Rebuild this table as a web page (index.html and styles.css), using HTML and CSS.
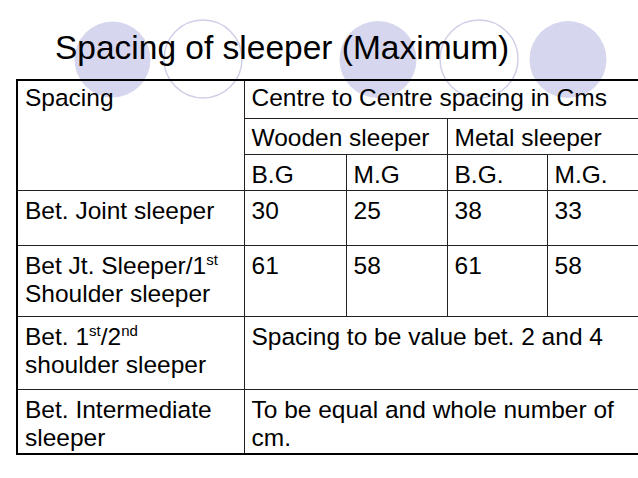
FILE: index.html
```html
<!DOCTYPE html>
<html>
<head>
<meta charset="utf-8">
<link rel="stylesheet" href="styles.css">
</head>
<body>
<div class="slide">
  <svg class="deco" width="638" height="110" viewBox="0 0 638 110" aria-hidden="true">
    <circle cx="112.5" cy="59.5" r="38" class="fill"/>
    <circle cx="203" cy="59" r="39" class="ring"/>
    <circle cx="378" cy="59.5" r="38.5" class="fill"/>
    <circle cx="479" cy="59" r="39" class="ring"/>
    <circle cx="568" cy="59.5" r="38.5" class="fill"/>
  </svg>
  <h1 class="title">Spacing of sleeper (Maximum)</h1>
  <table class="grid">
    <colgroup>
      <col class="c1"><col class="c2"><col class="c3"><col class="c4"><col class="c5">
    </colgroup>
    <tr class="r1">
      <td rowspan="3">Spacing</td>
      <td colspan="4">Centre to Centre spacing in Cms</td>
    </tr>
    <tr class="r2">
      <td colspan="2">Wooden sleeper</td>
      <td colspan="2">Metal sleeper</td>
    </tr>
    <tr class="r3">
      <td>B.G</td><td>M.G</td><td>B.G.</td><td>M.G.</td>
    </tr>
    <tr class="r4">
      <td>Bet. Joint sleeper</td><td>30</td><td>25</td><td>38</td><td>33</td>
    </tr>
    <tr class="r5">
      <td>Bet Jt. Sleeper/1<sup class="sup">st</sup><br>Shoulder sleeper</td><td>61</td><td>58</td><td>61</td><td>58</td>
    </tr>
    <tr class="r6">
      <td>Bet. 1<sup class="sup">st</sup>/2<sup class="sup">nd</sup><br>shoulder sleeper</td>
      <td colspan="4">Spacing to be value bet. 2 and 4</td>
    </tr>
    <tr class="r7">
      <td>Bet. Intermediate<br>sleeper</td>
      <td colspan="4">To be equal and whole number of cm.</td>
    </tr>
  </table>
</div>
</body>
</html>
```
FILE: styles.css
```css
html, body {
  margin: 0;
  padding: 0;
  background: #ffffff;
}
.slide {
  position: relative;
  width: 638px;
  height: 478px;
  overflow: hidden;
  font-family: "Liberation Sans", Arial, sans-serif;
  color: #000;
}
.deco {
  position: absolute;
  left: 0;
  top: 0;
  z-index: 0;
}
.deco .fill {
  fill: #d6d6ee;
}
.deco .ring {
  fill: none;
  stroke: #cfcfe8;
  stroke-width: 1.5;
}
.title {
  position: relative;
  z-index: 1;
  margin: 0;
  padding: 29px 0 0 55px;
  height: 50px;
  box-sizing: content-box;
  font-size: 33.5px;
  font-weight: normal;
  line-height: 38px;
  white-space: nowrap;
}
.grid {
  position: relative;
  z-index: 1;
  margin-left: 16px;
  width: 622px;
  table-layout: fixed;
  border-collapse: collapse;
  border: 2px solid #000;
  font-size: 24.5px;
  line-height: 28px;
}
.c1 { width: 227px; }
.c2 { width: 102px; }
.c3 { width: 101px; }
.c4 { width: 100px; }
.c5 { width: 92px; }
.grid td {
  border: 1px solid #222;
  padding: 6px 4px 0 7px;
  vertical-align: top;
  text-align: left;
  box-sizing: border-box;
}
.r1 td { padding-top: 3px; }
.r2 td { padding-top: 5px; }
.r1 { height: 38px; }
.r2 { height: 36px; }
.r3 { height: 36px; }
.r4 { height: 55px; }
.r5 { height: 71px; }
.r6 { height: 73px; }
.r7 { height: 65px; }
.sup {
  font-size: 15px;
  line-height: 0;
  vertical-align: 9px;
}
```
